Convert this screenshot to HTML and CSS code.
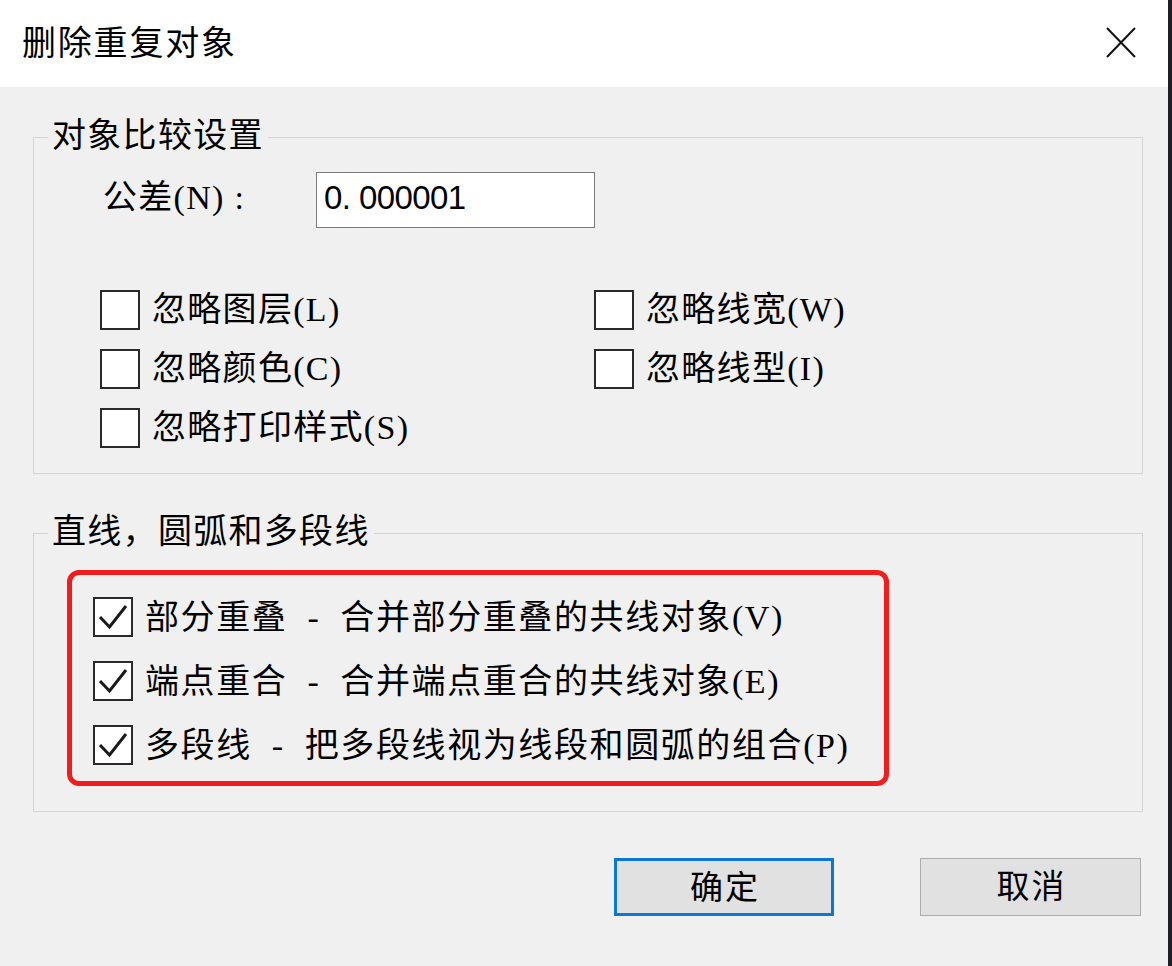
FILE: index.html
```html
<!DOCTYPE html>
<html lang="zh-CN">
<head>
<meta charset="utf-8">
<title>删除重复对象</title>
<link rel="stylesheet" href="styles.css">
</head>
<body>
<div class="window">
  <div class="titlebar">
    <span class="title">删除重复对象</span>
    <svg class="close" viewBox="0 0 30 31" width="30" height="31"><path d="M1 1 L29 30 M29 1 L1 30" stroke="#111" stroke-width="2" fill="none"/></svg>
  </div>
  <div class="content">
    <fieldset class="group group-compare">
      <legend>对象比较设置</legend>
      <div class="tol-row">
        <label class="tol-label">公差(N) :</label>
        <div class="input">0. 000001</div>
      </div>
      <div class="opt-grid">
        <div class="opt"><span class="cb"></span><span class="opt-text">忽略图层(L)</span></div>
        <div class="opt"><span class="cb"></span><span class="opt-text">忽略线宽(W)</span></div>
        <div class="opt"><span class="cb"></span><span class="opt-text">忽略颜色(C)</span></div>
        <div class="opt"><span class="cb"></span><span class="opt-text">忽略线型(I)</span></div>
        <div class="opt"><span class="cb"></span><span class="opt-text">忽略打印样式(S)</span></div>
      </div>
    </fieldset>
    <fieldset class="group group-lines">
      <legend>直线，圆弧和多段线</legend>
      <div class="highlight">
        <div class="opt opt-check"><span class="cb"><svg viewBox="0 0 36 36" width="36" height="36"><path d="M5 18 L14.5 28 L31 7" stroke="#1a1a1a" stroke-width="3" fill="none"/></svg></span><span class="opt-text">部分重叠<span class="dash">-</span>合并部分重叠的共线对象(V)</span></div>
        <div class="opt opt-check"><span class="cb"><svg viewBox="0 0 36 36" width="36" height="36"><path d="M5 18 L14.5 28 L31 7" stroke="#1a1a1a" stroke-width="3" fill="none"/></svg></span><span class="opt-text">端点重合<span class="dash">-</span>合并端点重合的共线对象(E)</span></div>
        <div class="opt opt-check"><span class="cb"><svg viewBox="0 0 36 36" width="36" height="36"><path d="M5 18 L14.5 28 L31 7" stroke="#1a1a1a" stroke-width="3" fill="none"/></svg></span><span class="opt-text">多段线<span class="dash">-</span>把多段线视为线段和圆弧的组合(P)</span></div>
      </div>
    </fieldset>
    <div class="buttons">
      <button class="btn btn-default">确定</button>
      <button class="btn">取消</button>
    </div>
  </div>
</div>
</body>
</html>
```
FILE: styles.css
```css
html, body {
  margin: 0;
  padding: 0;
}
body {
  width: 1172px;
  height: 966px;
  overflow: hidden;
  background: #f0f0f0;
  color: #000;
  font-family: "Liberation Serif", "Noto Sans CJK SC", serif;
}
.window {
  width: 1172px;
  height: 966px;
  box-sizing: border-box;
  border-right: 4px solid #1f1d26;
  background: #f0f0f0;
  display: flex;
  flex-direction: column;
}
.titlebar {
  flex: none;
  height: 87px;
  background: #fff;
  display: flex;
  align-items: center;
  justify-content: space-between;
  padding: 0 32px 0 22px;
}
.title {
  font-family: "Noto Sans CJK SC", sans-serif;
  font-size: 34px;
  letter-spacing: 1.8px;
  line-height: 1;
  margin-top: -5px;
}
.close {
  display: block;
  margin-top: -3px;
}
.content {
  padding: 30px 25px 0 33px;
}
.group {
  margin: 0;
  padding: 0;
  border: 1px solid #d4d4d4;
  min-inline-size: 0;
}
.group legend {
  margin-left: 14px;
  padding: 0 4px 2px;
  font-size: 34px;
  line-height: 38px;
  letter-spacing: 1.3px;
}
.tol-row {
  display: flex;
  align-items: center;
  margin-top: 15px;
  height: 56px;
  font-size: 34px;
  letter-spacing: 1.3px;
}
.tol-label {
  width: 213px;
  margin-left: 69px;
  margin-bottom: 12px;
}
.input {
  width: 279px;
  height: 56px;
  box-sizing: border-box;
  border: 1px solid #7a7a7a;
  background: #fff;
  font-family: "Liberation Sans", sans-serif;
  font-size: 33px;
  letter-spacing: -0.6px;
  padding: 0 0 4px 7px;
  display: flex;
  align-items: center;
}
.opt-grid {
  display: grid;
  grid-template-columns: 494px auto;
  grid-auto-rows: 59px;
  margin: 52px 0 0 66px;
  padding-bottom: 16px;
}
.opt {
  display: flex;
  align-items: center;
  font-size: 34px;
  letter-spacing: 1.3px;
}
.opt-text {
  margin-bottom: 6px;
}
.opt-check .opt-text {
  letter-spacing: 1.6px;
}
.cb {
  flex: none;
  width: 40px;
  height: 40px;
  box-sizing: border-box;
  border: 2px solid #2a2a2a;
  background: #fff;
  margin-right: 12px;
  display: block;
}
.cb svg {
  display: block;
}
.group-lines {
  margin-top: 39px;
}
.highlight {
  margin: 17px 0 25px 33px;
  width: 822px;
  box-sizing: border-box;
  border: 5px solid #f11c1c;
  border-radius: 12px;
  padding: 10px 0 4px 21px;
}
.opt-check {
  height: 64px;
}
.dash {
  margin: 0 20px;
}
.buttons {
  display: flex;
  justify-content: flex-end;
  gap: 86px;
  margin-top: 46px;
  padding-right: 2px;
}
.btn {
  width: 221px;
  height: 58px;
  box-sizing: border-box;
  background: #e1e1e1;
  border: 1px solid #adadad;
  padding: 0 0 6px 2px;
  margin: 0;
  font-family: "Noto Sans CJK SC", sans-serif;
  font-size: 33px;
  letter-spacing: 2px;
  color: #000;
}
.btn-default {
  width: 220px;
  border: 3px solid #0b78d6;
}
```
